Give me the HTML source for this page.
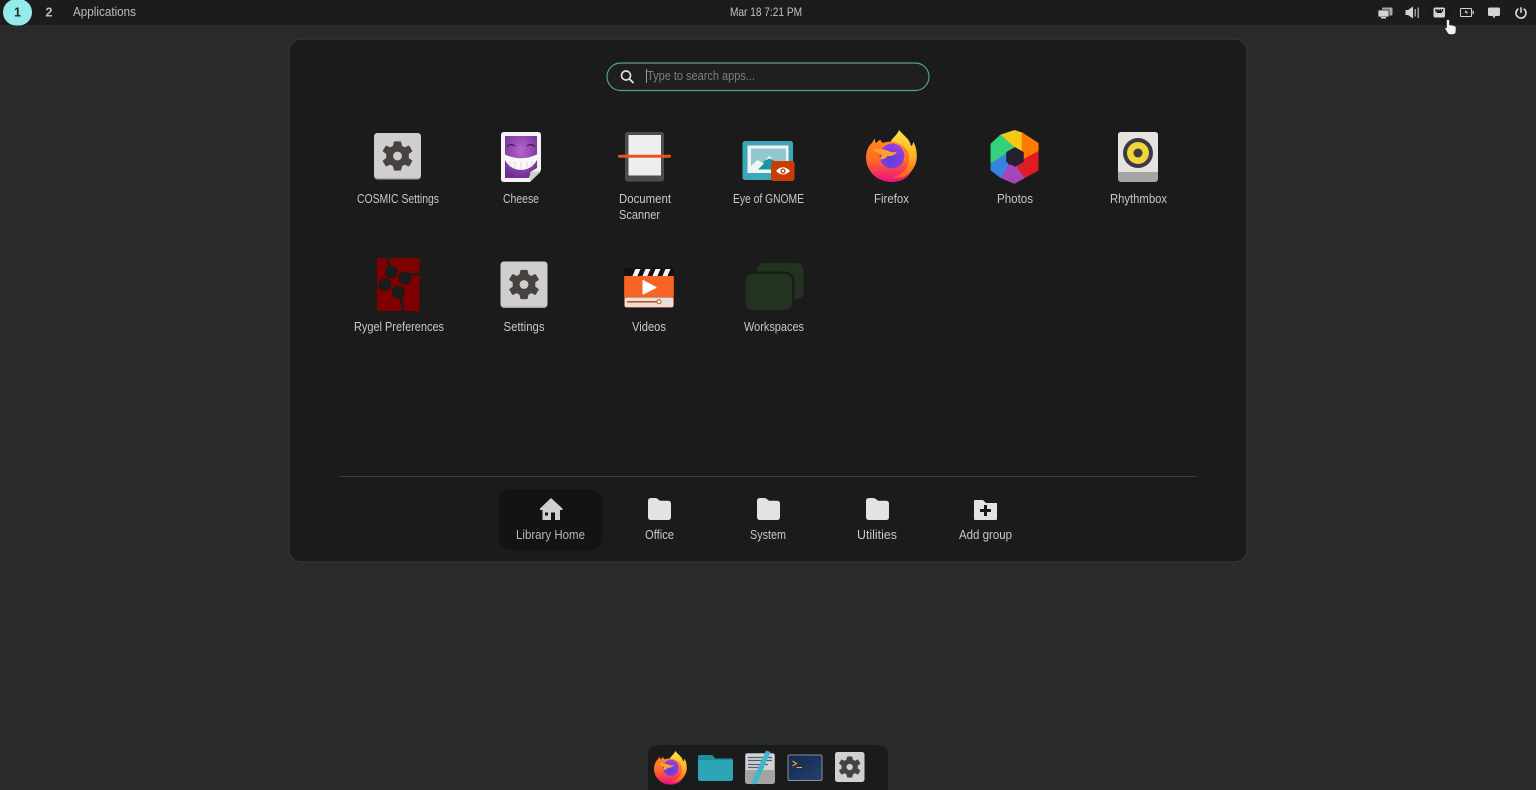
<!DOCTYPE html>
<html lang="en"><head><meta charset="utf-8"><title>Applications</title>
<style>
html,body{margin:0;padding:0;width:1536px;height:790px;overflow:hidden;background:#292a2c}
svg{display:block}
text{font-family:"Liberation Sans",sans-serif;font-size:12.5px;fill:#c8c8c8}
</style></head><body>
<svg width="1536" height="790" viewBox="0 0 1536 790" xmlns="http://www.w3.org/2000/svg">
<defs>
<linearGradient id="ffb" x1="0" y1="0" x2="0" y2="1"><stop offset="0" stop-color="#ff8a1f"/><stop offset=".5" stop-color="#ff6a25"/><stop offset=".8" stop-color="#f5305f"/><stop offset="1" stop-color="#e3128a"/></linearGradient>
<linearGradient id="ffy" x1="0" y1="0" x2="0" y2="1"><stop offset="0" stop-color="#ffe14a"/><stop offset=".55" stop-color="#ffb31f"/><stop offset="1" stop-color="#ff5a20"/></linearGradient>
<radialGradient id="ffp" cx=".45" cy=".65" r=".65"><stop offset="0" stop-color="#5a3fd8"/><stop offset="1" stop-color="#9a3fe0"/></radialGradient>
<radialGradient id="chz" cx=".5" cy=".35" r=".7"><stop offset="0" stop-color="#b566d0"/><stop offset="1" stop-color="#6d2c8e"/></radialGradient>
<linearGradient id="term" x1="0" y1="0" x2="1" y2="1"><stop offset="0" stop-color="#14284d"/><stop offset="1" stop-color="#23416f"/></linearGradient>
<g id="gear"><path fill="#47423f" fill-rule="evenodd" d="M-3-14H3L4-9.700 7.300-8 11.300-9.800 14.200-5 10.700-2.300V2.300L14.200 5 11.300 9.800 7.300 8 4 9.700 3 14H-3L-4 9.700-7.300 8-11.300 9.800-14.200 5-10.700 2.300V-2.300L-14.200-5-11.300-9.800-7.300-8-4-9.700ZM0-5A5 5 0 1 0 0 5 5 5 0 1 0 0-5Z" stroke="#47423f" stroke-width="1.200" stroke-linejoin="round"/></g>
<g id="tile"><rect x="0" y="0" width="47" height="46.500" rx="3.500" fill="#a9a9a9"/><rect x="0" y="0" width="47" height="45" rx="3.500" fill="#cfcfcf"/><use href="#gear" x="23.500" y="23"/></g>
<g id="ff">
<path fill="url(#ffb)" d="M9 8C8.600 10 9 12 10 13L14 9.500C15 11 16 12.500 17.500 13.500L31 10 45 20C51 30 48 52 25.500 52 11 52 0 41 0 27.500 0 22 2 16 6 13 7 11 8 9.500 9 8Z"/>
<path fill="url(#ffy)" d="M33 0C31 6 24 9 25 13 36 12 44 20 43 30 42 40 34 46 26 47.500 39 50.500 50.500 40 50.800 27 51 21 49.500 15 47 11.500 47 14 46.500 15.500 45 16 44 9 38 6 33 0Z"/>
<path fill="#ff8a1f" d="M17 13C24 10 33 12 38 18 40 22 40 27 39 31L13 26Z"/>
<circle cx="26" cy="26" r="12.500" fill="url(#ffp)"/>
<path fill="#ffa02a" d="M6.500 20C12 18 18 19 23.500 21.500 26 22.500 29 22.500 31 21.500 29.500 25 25 26.500 21.500 26 19.500 28.800 16 30 13 29 15 27.500 16 26.300 15.500 25 12.500 23 9.500 21 6.500 20Z"/>
</g>
</defs>

<!-- top bar -->
<rect x="0" y="0" width="1536" height="25" fill="#1c1c1c"/>
<rect x="3" y="-1" width="29" height="26.500" rx="13.200" fill="#94ebeb"/>
<text x="17.500" y="16.500" text-anchor="middle" style="font-weight:700;fill:#1b2a2a;font-size:12.500px">1</text>
<text x="49" y="16.500" text-anchor="middle" style="font-weight:700;fill:#bdbdbd;font-size:12.500px">2</text>
<text x="73" y="16" textLength="63" lengthAdjust="spacingAndGlyphs" style="fill:#bdbdbd">Applications</text>
<text x="730" y="16" textLength="72" lengthAdjust="spacingAndGlyphs" style="fill:#c2c2c2;font-size:12px">Mar 18 7:21 PM</text>

<!-- tray -->
<circle cx="1439" cy="12.500" r="12" fill="#1a1a1a"/>
<g fill="#d4d4d4">
<rect x="1382" y="7.500" width="10.500" height="8" rx="1" fill="#a8a8a8"/>
<rect x="1378" y="10" width="11" height="7" rx="1" stroke="#1c1c1c" stroke-width=".8"/>
<rect x="1381" y="17" width="5" height="1.500"/>
<path d="M1405.500 10H1408L1413 6.500V18.500L1408 15H1405.500Z"/>
<rect x="1414.500" y="9" width="1.500" height="7.500" fill="#9a9a9a"/><rect x="1417.500" y="7.500" width="1.500" height="10.500" fill="#9a9a9a"/>
<path fill-rule="evenodd" d="M1435 7.500H1443.500Q1445 7.500 1445 9V16Q1445 17.500 1443.500 17.500H1435Q1433.500 17.500 1433.500 16V9Q1433.500 7.500 1435 7.500ZM1435.300 9V11.500H1436.500V13H1441.900V11.500H1443.200V9H1442V10.200H1440.900V9H1439.800V10.200H1438.700V9H1437.600V10.200H1436.500V9Z"/>
<path fill-rule="evenodd" d="M1461 8H1471Q1472 8 1472 9V16Q1472 17 1471 17H1461Q1460 17 1460 16V9Q1460 8 1461 8ZM1461 9V16H1471V9Z"/>
<rect x="1472.500" y="10.800" width="1.300" height="3.400"/>
<path d="M1465.500 10.300 1467 11.800H1468L1466.500 14.800 1466.700 12.800H1464.800Z"/>
<path d="M1489.500 7.500H1498.500Q1500 7.500 1500 9V14.500Q1500 16 1498.500 16H1495.500L1493.500 18.500 1493 16H1489.500Q1488 16 1488 14.500V9Q1488 7.500 1489.500 7.500Z"/>
</g>
<path d="M1517.800 9.200A5 5 0 1 0 1524.200 9.200" fill="none" stroke="#d4d4d4" stroke-width="1.700" stroke-linecap="round"/>
<rect x="1520.200" y="7" width="1.600" height="6" rx=".8" fill="#d4d4d4"/>
<!-- hand cursor -->
<path d="M1446.500 20.500Q1446.500 19.500 1448 19.500T1449.500 20.500V25L1450.500 24.800Q1451.700 24.700 1452.200 25.300 1453.300 24.900 1454 25.800 1455.500 25.700 1456 27V31Q1456 34.500 1453 34.500H1450Q1448.500 34.500 1447.500 33L1445 29Q1444.500 27 1446.500 27.800Z" fill="#f2f2f2" stroke="#222" stroke-width=".6"/>

<!-- launcher panel -->
<rect x="289" y="39" width="958" height="523" rx="12" fill="#1b1b1b" stroke="#39393b" stroke-width="1"/>
<rect x="607" y="63" width="322" height="27.500" rx="13.700" fill="#1f1f1f" stroke="#5a9c9a" stroke-width="1.200"/>
<circle cx="626" cy="75.500" r="4.500" fill="none" stroke="#dcdcdc" stroke-width="1.700"/>
<path d="M629.500 79 633 82.500" stroke="#dcdcdc" stroke-width="1.900" stroke-linecap="round"/>
<rect x="646" y="69" width="1" height="14" fill="#9a9a9a"/>
<text x="647" y="80" textLength="108" lengthAdjust="spacingAndGlyphs" style="fill:#7e7e7e">Type to search apps...</text>

<!-- row 1 icons -->
<use href="#tile" x="374" y="133"/>

<path d="M504 132H538Q541 132 541 135V170L530 182H504Q501 182 501 179V135Q501 132 504 132Z" fill="#f4f4f4"/>
<path d="M505 136H537V168L531 171.500 529 178H505Z" fill="url(#chz)"/>
<path d="M505 154.500Q521 162 537 154.500V160Q532 169.500 521 170 510 169.500 505 160Z" fill="#f8f8f8"/>
<path d="M510 161V167M515 161V169M521 162V170M527 161V169M532 161V167" stroke="#d0c4d6" stroke-width=".6"/>
<path d="M507 146.500Q511 143 515 146M527 146Q531 143 535 146.500" fill="none" stroke="#3c1a4c" stroke-width="1.200"/>
<path d="M530 182V173.500Q530 171.500 532 171.500H541Z" fill="#cfcfcf"/>

<rect x="625" y="132" width="39" height="49.500" rx="2.500" fill="#4c4c4c"/>
<rect x="628.500" y="135" width="32.500" height="40.500" fill="#eeeeee"/>
<rect x="618" y="154.800" width="53" height="3" rx="1.500" fill="#e9531f"/>

<rect x="742.500" y="141" width="50.500" height="39" rx="2.500" fill="#3ca7b6"/>
<rect x="747.500" y="145.500" width="41" height="27.500" fill="#f0f4f4"/>
<rect x="751" y="148.500" width="35" height="21" fill="#92c7d0"/>
<path d="M757 169.500 769 155.500 783 169.500Z" fill="#1c95a3"/>
<path d="M751 169.500V166L757.500 160 764 163.500 758 169.500ZM765 160.500 769 155.500 773.500 160 769.500 158.500Z" fill="#f0f4f4"/>
<rect x="771" y="161" width="23.500" height="20" rx="2.500" fill="#c83c05"/>
<path d="M776 171Q783 163.500 790 171 783 178 776 171Z" fill="#fff"/>
<circle cx="783" cy="171" r="2.600" fill="#c83c05"/>
<circle cx="783" cy="171" r="1.200" fill="#fff"/>

<use href="#ff" x="866" y="130"/>

<g transform="translate(990.500 130)" stroke-width="1.500" stroke-linejoin="round">
<path d="M10 5.500 24 .8 32 3.500V21.500L24 18Z" fill="#f5c716" stroke="#f5c716"/>
<path d="M32 3.500 47.300 13.500V22L32 30.500Z" fill="#ff7a00" stroke="#ff7a00"/>
<path d="M47.300 22V40L33 48 25 36 32 30.500Z" fill="#e01b24" stroke="#e01b24"/>
<path d="M33 48 24 53 10 47 17 35 25 36Z" fill="#a347ba" stroke="#a347ba"/>
<path d="M10 47 .8 40V32L17 22V35Z" fill="#3584e4" stroke="#3584e4"/>
<path d="M.8 32V14L10 5.500 24 18 17 22Z" fill="#33d17a" stroke="#33d17a"/>
<path d="M24.500 18 32.500 22.500V31.500L24.500 36 16.500 31.500V22.500Z" fill="#241f31" stroke="#241f31"/>
</g>

<rect x="1118" y="132" width="40" height="50" rx="3" fill="#a6a5a1"/>
<path d="M1121 132H1155Q1158 132 1158 135V172H1118V135Q1118 132 1121 132Z" fill="#e5e3df"/>
<circle cx="1138" cy="153" r="15" fill="#3d3846"/>
<circle cx="1138" cy="153" r="11" fill="#f0d539"/>
<circle cx="1138" cy="153" r="4.500" fill="#3d3846"/>

<!-- row 1 labels -->
<text x="357" y="203" textLength="82" lengthAdjust="spacingAndGlyphs">COSMIC Settings</text>
<text x="503" y="203" textLength="36" lengthAdjust="spacingAndGlyphs">Cheese</text>
<text x="619" y="203" textLength="52" lengthAdjust="spacingAndGlyphs">Document</text>
<text x="619" y="219" textLength="41" lengthAdjust="spacingAndGlyphs">Scanner</text>
<text x="733" y="203" textLength="71" lengthAdjust="spacingAndGlyphs">Eye of GNOME</text>
<text x="874" y="203" textLength="35" lengthAdjust="spacingAndGlyphs">Firefox</text>
<text x="997" y="203" textLength="36" lengthAdjust="spacingAndGlyphs">Photos</text>
<text x="1110" y="203" textLength="57" lengthAdjust="spacingAndGlyphs">Rhythmbox</text>

<!-- row 2 icons -->
<rect x="377" y="258" width="42.500" height="53" fill="#7e0000"/>
<g fill="#1b1b1b">
<circle cx="391.300" cy="272" r="6.500"/><circle cx="405" cy="278" r="6.500"/><circle cx="385" cy="284.500" r="6.500"/><circle cx="398.300" cy="292" r="6.500"/>
</g>
<g fill="none" stroke="#1b1b1b" stroke-width="2.400">
<path d="M387.700 258Q388 264 391 268"/><path d="M408 274Q413 275 419.500 273.800"/><path d="M381 287Q380 288 377 287.500"/><path d="M400 297Q402.500 303 403 311"/>
</g>

<use href="#tile" x="500.500" y="261.500"/>

<rect x="624" y="268" width="50" height="40" rx="3" fill="#b8491a"/>
<rect x="624" y="268" width="50" height="9" rx="2" fill="#111"/>
<path d="M632 277 635.500 269H640.500L637 277ZM642 277 645.500 269H650.500L647 277ZM652 277 655.500 269H660.500L657 277ZM662 277 665.500 269H670.500L667 277Z" fill="#f4f4f4"/>
<rect x="624.500" y="276" width="49" height="21" fill="#f66323"/>
<path d="M643 280.500 656 287.500 643 294Z" fill="#fff" stroke="#fff" stroke-linejoin="round"/>
<rect x="624.800" y="297.500" width="48.500" height="9.500" rx="1.500" fill="#e4e2de"/>
<rect x="627" y="301" width="31" height="1.600" fill="#c9521c"/>
<circle cx="659" cy="301.800" r="2" fill="#fff" stroke="#c9521c" stroke-width="1"/>

<rect x="757" y="263" width="46.500" height="36" rx="7" fill="#22331f"/>
<rect x="743.500" y="271.500" width="51" height="40.500" rx="9" fill="#1b1b1b"/>
<rect x="745.500" y="274" width="46.500" height="36" rx="7" fill="#22331f"/>

<!-- row 2 labels -->
<text x="354" y="331" textLength="90" lengthAdjust="spacingAndGlyphs">Rygel Preferences</text>
<text x="503.500" y="331" textLength="41" lengthAdjust="spacingAndGlyphs">Settings</text>
<text x="632" y="331" textLength="34" lengthAdjust="spacingAndGlyphs">Videos</text>
<text x="744" y="331" textLength="60" lengthAdjust="spacingAndGlyphs">Workspaces</text>

<!-- groups -->
<rect x="339" y="476" width="858" height="1" fill="#3a3a3a"/>
<rect x="499" y="489" width="103" height="61" rx="12" fill="#131313"/>
<path fill-rule="evenodd" fill="#cfcfcf" d="M551 498 562.500 508.500V510H560V520H555V512.500H551V520H542.500V510H540V508.500ZM545 512.500V515.500H548V512.500Z"/>
<g fill="#e3e3e3">
<path d="M651 498H655Q657 498 658.200 499.200L660 500.800H668Q671 500.800 671 503.800V517Q671 520 668 520H651Q648 520 648 517V501Q648 498 651 498Z"/>
<path d="M760 498H764Q766 498 767.200 499.200L769 500.800H777Q780 500.800 780 503.800V517Q780 520 777 520H760Q757 520 757 517V501Q757 498 760 498Z"/>
<path d="M869 498H873Q875 498 876.200 499.200L878 500.800H886Q889 500.800 889 503.800V517Q889 520 886 520H869Q866 520 866 517V501Q866 498 869 498Z"/>
<path fill-rule="evenodd" d="M975 500H983L986 503H997V519Q997 520 996 520H975Q974 520 974 519V501Q974 500 975 500ZM984 505V509H980V512H984V516H987V512H991V509H987V505Z"/>
</g>
<text x="516" y="539" textLength="69" lengthAdjust="spacingAndGlyphs" style="fill:#b8b8b8">Library Home</text>
<text x="645" y="539" textLength="29" lengthAdjust="spacingAndGlyphs">Office</text>
<text x="750" y="539" textLength="36" lengthAdjust="spacingAndGlyphs">System</text>
<text x="857" y="539" textLength="40" lengthAdjust="spacingAndGlyphs">Utilities</text>
<text x="959" y="539" textLength="53" lengthAdjust="spacingAndGlyphs">Add group</text>

<!-- dock -->
<path d="M658 745H878Q888 745 888 755V790H648V755Q648 745 658 745Z" fill="#1b1b1b"/>
<use href="#ff" transform="translate(654 751) scale(.645)"/>
<path d="M700 755H711Q713 755 714 757L715 758.500H731Q733 758.500 733 760.500V778.500Q733 781 730.500 781H700.500Q698 781 698 778.500V757Q698 755 700 755Z" fill="#1f8fa0"/>
<path d="M698 761.500Q698 760 700 760H731Q733 760 733 762V778.500Q733 781 730.500 781H700.500Q698 781 698 778.500Z" fill="#2ca6b5"/>
<rect x="745" y="753" width="30" height="31" rx="2.500" fill="#a3a3a3"/>
<rect x="746" y="754" width="28" height="16" fill="#d2d2d2"/>
<path d="M748 757.500H772M748 760.500H772M748 764.500H768M748 767.500H764" stroke="#4f5f80" stroke-width="1.300"/>
<path d="M766 750.500 770.500 752 757 783 752.500 784.500 752.500 780Z" fill="#3fb6cc"/>
<rect x="788" y="755" width="34" height="25.500" rx="1.500" fill="url(#term)" stroke="#8a8f98" stroke-width="1"/>
<path d="M792.500 761 796.500 763.500 792.500 766" fill="none" stroke="#f5a623" stroke-width="1.100"/>
<rect x="796.500" y="767" width="5.500" height="1" fill="#f5a623"/>
<rect x="835" y="752" width="29.500" height="30" rx="2.500" fill="#d0d0d0"/>
<use href="#gear" transform="translate(849.700 767) scale(.72)"/>
</svg>
</body></html>
